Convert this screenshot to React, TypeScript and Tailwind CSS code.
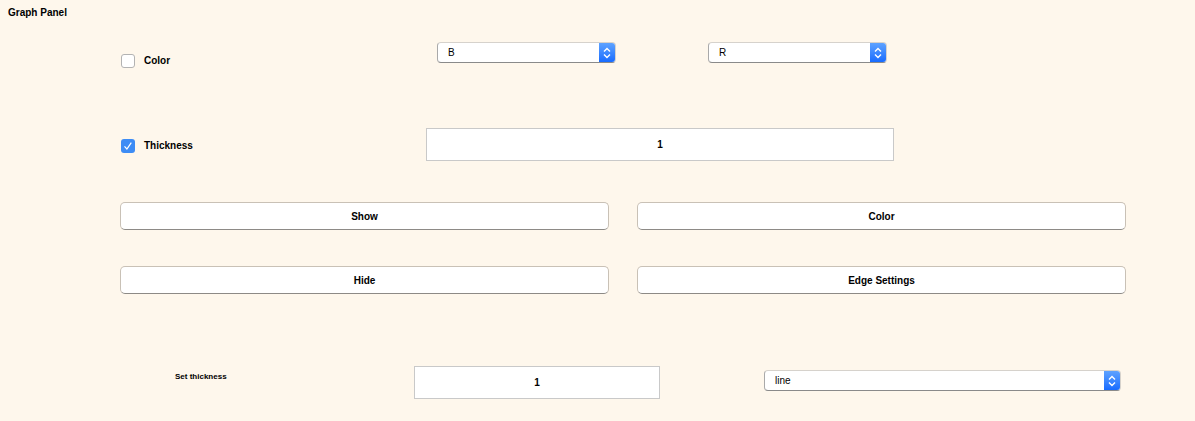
import React from 'react';

const font = `font-['Liberation_Sans',Arial,sans-serif]`;

function Chevrons(): React.ReactElement {
    return (
        <svg width="10" height="14" viewBox="0 0 10 14" fill="none">
            <path d="M2 5.5 L5 2.5 L8 5.5" stroke="white" strokeWidth="1.4" />
            <path d="M2 8.5 L5 11.5 L8 8.5" stroke="white" strokeWidth="1.4" />
        </svg>
    );
}

interface SelectProps {
    value: string
    className?: string
}

function MacSelect({ value, className }: SelectProps): React.ReactElement {
    return (
        <div className={`flex h-[21px] overflow-hidden rounded-[4px] bg-white border border-[#d6d2cc] border-b-[#8a8a8a] border-l-[#a9a9a9] ${className ?? ``}`}>
            <span className="flex-1 pl-[10px] text-[10px] leading-[19px] text-black">{value}</span>
            <span className="flex w-[16px] items-center justify-center bg-gradient-to-b from-[#5ea2ff] to-[#176bff]">
                <Chevrons />
            </span>
        </div>
    );
}

interface CheckProps {
    label: string
    checked?: boolean
}

function MacCheck({ label, checked }: CheckProps): React.ReactElement {
    return (
        <div className="flex items-center">
            {checked
? (
                <span className="flex h-[14px] w-[14px] items-center justify-center rounded-[3px] bg-[#3d8cf5]">
                    <svg width="14" height="14" viewBox="0 0 14 14" fill="none">
                        <path d="M3.5 7.4 L5.9 10 L10.3 3.6" stroke="white" strokeWidth="1.2" />
                    </svg>
                </span>
            )
: (
                <span className="h-[14px] w-[14px] rounded-[3px] border border-[#b3b3b3] bg-white" />
            )}
            <span className="ml-[9px] text-[10px] font-bold text-black">{label}</span>
        </div>
    );
}

function MacButton({ label }: { label: string }): React.ReactElement {
    return (
        <button className="h-[28px] w-[489px] rounded-[5px] border border-[#c9c1b6] border-b-[#8d8a86] bg-white text-[10px] font-bold text-black">
            {label}
        </button>
    );
}

function Field({ value, className }: { value: string, className: string }): React.ReactElement {
    return (
        <div className={`flex items-center justify-center border border-[#c9c9c9] bg-white text-[10px] font-bold text-black ${className}`}>
            {value}
        </div>
    );
}

export default function App(): React.ReactElement {
    return (
        <div className={`h-[421px] w-[1195px] bg-[#fef7ec] ${font}`}>
            <div className="h-[42px] pl-[8px] pt-[7px] text-[10px] font-bold leading-[12px] text-black">
                Graph Panel
            </div>

            <div className="flex h-[86px] items-start">
                <div className="ml-[121px] mt-[11px] w-[316px]">
                    <MacCheck label="Color" />
                </div>
                <MacSelect value="B" className="w-[179px]" />
                <MacSelect value="R" className="ml-[92px] w-[179px]" />
            </div>

            <div className="flex h-[74px] items-start">
                <div className="ml-[121px] mt-[10px] w-[305px]">
                    <MacCheck label="Thickness" checked />
                </div>
                <Field value="1" className="h-[33px] w-[468px]" />
            </div>

            <div className="flex gap-[28px] pl-[120px]">
                <MacButton label="Show" />
                <MacButton label="Color" />
            </div>

            <div className="mt-[36px] flex gap-[28px] pl-[120px]">
                <MacButton label="Hide" />
                <MacButton label="Edge Settings" />
            </div>

            <div className="mt-[72px] flex items-start">
                <div className="ml-[175px] mt-[6px] w-[239px] text-[8px] font-bold leading-[10px] text-black">
                    Set thickness
                </div>
                <Field value="1" className="h-[33px] w-[246px]" />
                <MacSelect value="line" className="ml-[104px] mt-[4px] w-[357px]" />
            </div>
        </div>
    );
}
